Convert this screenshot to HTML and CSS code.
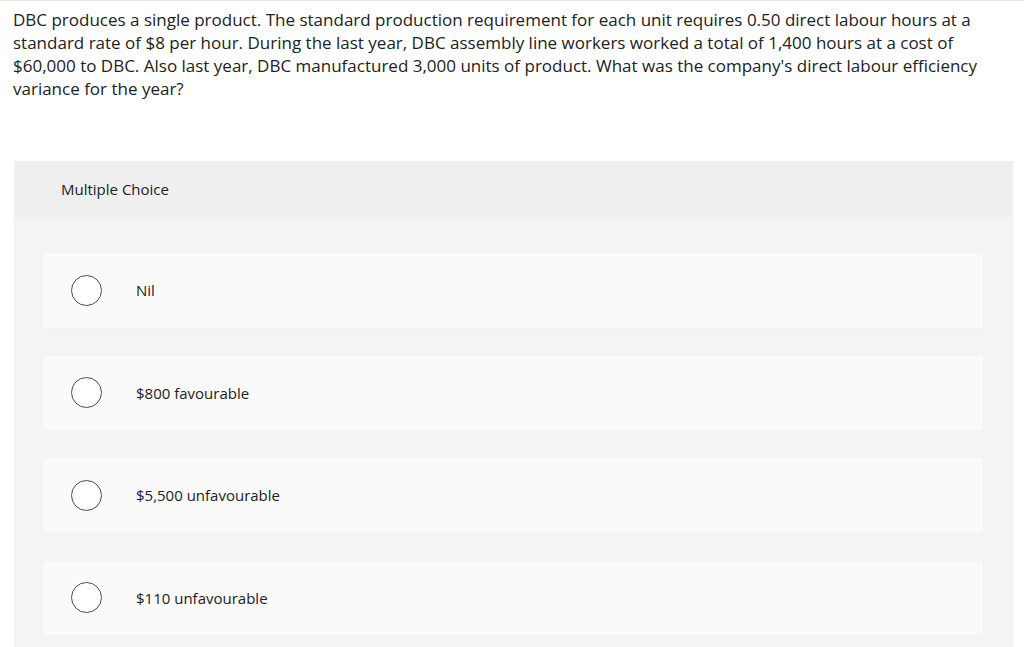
FILE: index.html
```html
<!DOCTYPE html>
<html>
<head>
<meta charset="utf-8">
<link rel="stylesheet" href="styles.css">
</head>
<body>
<div class="page">
  <p class="question">DBC produces a single product. The standard production requirement for each unit requires 0.50 direct labour hours at a standard rate of $8 per hour. During the last year, DBC assembly line workers worked a total of 1,400 hours at a cost of $60,000 to DBC. Also last year, DBC manufactured 3,000 units of product. What was the company's direct labour efficiency variance for the year?</p>
  <section class="panel">
    <header class="panel-head">Multiple Choice</header>
    <div class="choices">
      <label class="choice"><span class="radio"></span><span class="choice-text">Nil</span></label>
      <label class="choice"><span class="radio"></span><span class="choice-text">$800 favourable</span></label>
      <label class="choice"><span class="radio"></span><span class="choice-text">$5,500 unfavourable</span></label>
      <label class="choice"><span class="radio"></span><span class="choice-text">$110 unfavourable</span></label>
    </div>
  </section>
</div>
</body>
</html>
```

FILE: styles.css
```css
html, body {
  margin: 0;
  padding: 0;
  background: #ffffff;
}
body {
  font-family: "Open Sans", Lato, Arial, sans-serif;
  color: #222222;
  height: 647px;
  overflow: hidden;
}
.page {
  border-top: 1px solid #e4e4e4;
  height: 100%;
}
.question {
  margin: 0;
  padding: 7px 13px 0 13px;
  font-size: 17px;
  line-height: 23px;
  height: 153px;
}
.panel {
  margin: 0 11px 0 14px;
  background: #f4f4f4;
  height: 490px;
  box-shadow: 0 0 1px rgba(0,0,0,0.04);
}
.panel-head {
  background: #efefef;
  height: 56px;
  display: flex;
  align-items: center;
  padding-left: 47px;
  font-size: 15px;
}
.choices {
  display: flex;
  flex-direction: column;
  gap: 28px;
  padding: 36px 30px 0 29px;
}
.choice {
  display: flex;
  align-items: center;
  height: 74.5px;
  background: #fafafa;
  box-shadow: 0 0 1px rgba(0,0,0,0.05);
  padding-left: 28px;
  font-size: 15px;
}
.radio {
  width: 29px;
  height: 29px;
  border: 1px solid #3e5063;
  border-radius: 50%;
  background: #ffffff;
  flex: none;
}
.choice-text {
  margin-left: 34px;
}
```
